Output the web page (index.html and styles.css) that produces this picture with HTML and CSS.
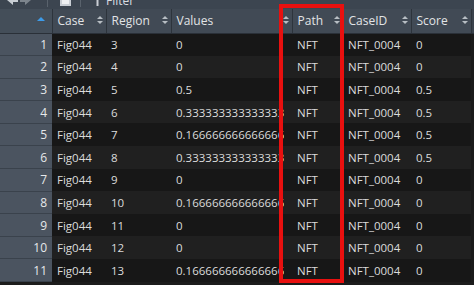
FILE: index.html
```html
<!DOCTYPE html>
<html>
<head>
<meta charset="utf-8">
<link rel="stylesheet" href="styles.css">
</head>
<body>
<div class="viewer">
  <div class="toolbar">
    <div class="tb-inner">
      <svg class="tb-nav" width="28" height="16" viewBox="0 0 28 16"><path d="M2 8 L8 3 L8 6 L13 6 L13 10 L8 10 L8 13 Z" fill="#c9ced4"/><path d="M26 8 L20 3 L20 6 L15 6 L15 10 L20 10 L20 13 Z" fill="#7d858d"/></svg>
      <span class="tb-sep"></span>
      <svg class="tb-icon" width="12" height="16" viewBox="0 0 12 16"><rect x="0" y="2" width="11" height="12" fill="#c9ced4"/><rect x="2" y="4" width="7" height="8" fill="#eef0f2"/></svg>
      <span class="tb-sep tb-sep2"></span>
      <svg class="tb-funnel" width="9" height="16" viewBox="0 0 9 16"><path d="M0 3 L9 3 L5.5 8 L5.5 14 L3.5 14 L3.5 8 Z" fill="#c9ced4"/></svg>
      <span class="tb-text">Filter</span>
    </div>
  </div>
  <table class="grid">
    <colgroup>
      <col class="c-num"><col class="c-case"><col class="c-region"><col class="c-values"><col class="c-path"><col class="c-caseid"><col class="c-score"><col class="c-rest">
    </colgroup>
    <thead>
      <tr>
        <th class="num-head"><span class="up"></span></th>
        <th><span class="lbl">Case</span><span class="sort"></span></th>
        <th><span class="lbl">Region</span><span class="sort"></span></th>
        <th><span class="lbl">Values</span><span class="sort"></span></th>
        <th><span class="lbl">Path</span><span class="sort"></span></th>
        <th><span class="lbl">CaseID</span><span class="sort"></span></th>
        <th><span class="lbl">Score</span><span class="sort"></span></th>
        <th class="rest"></th>
      </tr>
    </thead>
    <tbody>
      <tr><td class="num">1</td><td>Fig044</td><td>3</td><td>0</td><td>NFT</td><td>NFT_0004</td><td>0</td><td class="rest"></td></tr>
      <tr><td class="num">2</td><td>Fig044</td><td>4</td><td>0</td><td>NFT</td><td>NFT_0004</td><td>0</td><td class="rest"></td></tr>
      <tr><td class="num">3</td><td>Fig044</td><td>5</td><td>0.5</td><td>NFT</td><td>NFT_0004</td><td>0.5</td><td class="rest"></td></tr>
      <tr><td class="num">4</td><td>Fig044</td><td>6</td><td><span class="v">0.3333333333333333</span></td><td>NFT</td><td>NFT_0004</td><td>0.5</td><td class="rest"></td></tr>
      <tr><td class="num">5</td><td>Fig044</td><td>7</td><td><span class="v">0.1666666666666666</span></td><td>NFT</td><td>NFT_0004</td><td>0.5</td><td class="rest"></td></tr>
      <tr><td class="num">6</td><td>Fig044</td><td>8</td><td><span class="v">0.3333333333333333</span></td><td>NFT</td><td>NFT_0004</td><td>0.5</td><td class="rest"></td></tr>
      <tr><td class="num">7</td><td>Fig044</td><td>9</td><td>0</td><td>NFT</td><td>NFT_0004</td><td>0</td><td class="rest"></td></tr>
      <tr><td class="num">8</td><td>Fig044</td><td>10</td><td><span class="v">0.1666666666666666</span></td><td>NFT</td><td>NFT_0004</td><td>0</td><td class="rest"></td></tr>
      <tr><td class="num">9</td><td>Fig044</td><td>11</td><td>0</td><td>NFT</td><td>NFT_0004</td><td>0</td><td class="rest"></td></tr>
      <tr><td class="num">10</td><td>Fig044</td><td>12</td><td>0</td><td>NFT</td><td>NFT_0004</td><td>0</td><td class="rest"></td></tr>
      <tr><td class="num">11</td><td>Fig044</td><td>13</td><td><span class="v">0.1666666666666666</span></td><td>NFT</td><td>NFT_0004</td><td>0</td><td class="rest"></td></tr>
    </tbody>
  </table>
  <div class="highlight"></div>
</div>
</body>
</html>
```
FILE: styles.css
```css
html, body {
  margin: 0;
  padding: 0;
  background: #1c1c1c;
}
body {
  font-family: "Open Sans", "Noto Sans", sans-serif;
  width: 474px;
  height: 285px;
  overflow: hidden;
}
.viewer {
  position: relative;
  width: 474px;
  height: 285px;
  overflow: hidden;
  background: #1c1c1c;
}
.toolbar {
  height: 9px;
  background: #3c4550;
  overflow: hidden;
}
.tb-inner {
  display: flex;
  align-items: center;
  height: 16px;
  margin-top: -8px;
  padding-left: 5px;
}
.tb-sep {
  width: 1px;
  height: 14px;
  background: #59626c;
  margin: 0 12px 0 14px;
}
.tb-sep2 { margin-left: 8px; }
.tb-text {
  color: #d8dce0;
  font-size: 12px;
  margin-left: 4px;
}
.grid {
  border-collapse: collapse;
  table-layout: fixed;
  width: 474px;
  font-size: 11.5px;
  color: #dcdcdc;
}
.c-num { width: 52px; }
.c-case { width: 54px; }
.c-region { width: 65px; }
.c-values { width: 121px; }
.c-path { width: 51px; }
.c-caseid { width: 68px; }
.c-score { width: 60px; }
.c-rest { width: 3px; }
thead th {
  height: 24px;
  padding: 0 0 0 5px;
  background: #414a55;
  border-right: 1px solid #2d343c;
  border-bottom: 1px solid #2a3038;
  text-align: left;
  font-weight: normal;
  font-size: 12px;
  color: #e2e4e6;
  position: relative;
  white-space: nowrap;
  box-sizing: border-box;
}
thead th.num-head { background: #444e59; }
thead th.rest { background: #3a424c; border-right: none; }
.sort {
  position: absolute;
  right: 6px;
  top: 7px;
  width: 0;
  height: 0;
}
.sort::before, .sort::after {
  content: "";
  position: absolute;
  left: -3px;
  border-left: 3px solid transparent;
  border-right: 3px solid transparent;
}
.sort::before { top: 0; border-bottom: 3px solid #b8bec4; }
.sort::after { top: 5px; border-top: 3px solid #b8bec4; }
.up {
  position: absolute;
  right: 7px;
  top: 8px;
  border-left: 4px solid transparent;
  border-right: 4px solid transparent;
  border-bottom: 4px solid #3d9be9;
}
tbody td {
  height: 22.6px;
  padding: 0 0 0 5px;
  white-space: nowrap;
  overflow: hidden;
  box-sizing: border-box;
}
tbody tr:nth-child(odd) td { background: #171717; }
tbody tr:nth-child(even) td { background: #202020; }
tbody td.num {
  background: #4b5460 !important;
  text-align: right;
  padding: 0 5px 0 0;
  border-bottom: 1px solid #3a424c;
  color: #e6e8ea;
  font-size: 12px;
}
.v {
  display: block;
  width: 108px;
  overflow: hidden;
  white-space: nowrap;
}
tbody td.rest { background: #1a1a1a !important; padding: 0; }
.highlight {
  position: absolute;
  left: 279px;
  top: 4px;
  width: 65px;
  height: 279px;
  border: 4px solid #e8100f;
  box-sizing: border-box;
}
```
